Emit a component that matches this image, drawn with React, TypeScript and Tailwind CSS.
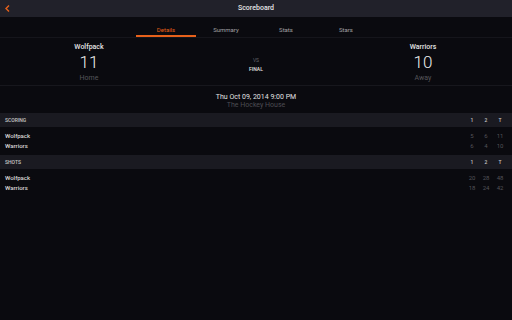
import React from 'react';

const tabs = ['Details', 'Summary', 'Stats', 'Stars'];

const sections = [
  {
    title: 'SCORING',
    rows: [
      { team: 'Wolfpack', values: [5, 6, 11] },
      { team: 'Warriors', values: [6, 4, 10] },
    ],
  },
  {
    title: 'SHOTS',
    rows: [
      { team: 'Wolfpack', values: [20, 28, 48] },
      { team: 'Warriors', values: [18, 24, 42] },
    ],
  },
];

const TeamScore: React.FC<{ name: string; score: number; side: string }> = ({ name, score, side }) => (
  <div className="w-[178px] flex flex-col items-center">
    <span className="h-[9px] text-[7px] leading-[9px] font-medium text-[#e6e6e6]">{name}</span>
    <span className="h-[18px] text-[17px] leading-[18px] font-light text-[#eeeeee] mt-[1px]">{score}</span>
    <span className="h-[9px] text-[7px] leading-[9px] text-[#57575c] mt-[3px]">{side}</span>
  </div>
);

export default function App() {
  return (
    <div className="w-[512px] h-[320px] bg-[#0a0a0f] overflow-hidden">
      {/* opacity just under 1 keeps the text on grayscale antialiasing */}
      <div
        className="w-full h-full flex flex-col opacity-[0.995]"
        style={{ fontFamily: 'Roboto, "Liberation Sans", sans-serif' }}
      >
        {/* Header */}
        <div className="h-[17px] bg-[#22222b] flex items-center relative shrink-0">
          <svg className="absolute left-[5px] top-[5px]" width="5" height="7" viewBox="0 0 5 7">
            <path d="M4 0.5 L1 3.5 L4 6.5" fill="none" stroke="#e8621c" strokeWidth="1.4" />
          </svg>
          <span className="w-full text-center text-[7px] leading-[9px] font-medium text-[#e8e8e8]">Scoreboard</span>
        </div>

        {/* Tabs */}
        <div className="h-[21px] flex justify-center border-b border-[#16161c] shrink-0">
          {tabs.map((tab, i) => (
            <div key={tab} className="w-[60px] flex flex-col">
              <span
                className={`h-[18px] pt-[9px] text-center text-[6px] leading-[8px] ${
                  i === 0 ? 'text-[#e8621c]' : 'text-[#a4a4a8]'
                }`}
              >
                {tab}
              </span>
              <div className={`h-[2px] ${i === 0 ? 'bg-[#e8621c]' : 'bg-transparent'}`} />
            </div>
          ))}
        </div>

        {/* Score */}
        <div className="h-[48px] flex items-start pt-[5px] border-b border-[#18181e] shrink-0">
          <TeamScore name="Wolfpack" score={11} side="Home" />
          <div className="flex-1 flex flex-col items-center pt-[14px]">
            <span className="text-[5px] leading-[6px] text-[#66666c]">VS</span>
            <span className="text-[5px] leading-[6px] font-medium text-[#e4e4e4] mt-[3px]">FINAL</span>
          </div>
          <TeamScore name="Warriors" score={10} side="Away" />
        </div>

        {/* Date */}
        <div className="h-[27px] flex flex-col items-center pt-[7px] shrink-0">
          <span className="h-[8px] text-[7px] leading-[8px] text-[#e4e4e4]">Thu Oct 09, 2014 9:00 PM</span>
          <span className="h-[8px] text-[7px] leading-[8px] text-[#4e4e54]">The Hockey House</span>
        </div>

        {/* Sections */}
        {sections.map((section) => (
          <div key={section.title} className="shrink-0">
            <div className="h-[14px] bg-[#1b1b22] flex items-center px-[5px]">
              <span className="flex-1 text-[5px] leading-[6px] font-medium text-[#c8c8c8]">{section.title}</span>
              {['1', '2', 'T'].map((c) => (
                <span key={c} className="w-[14px] text-center text-[5px] leading-[6px] font-medium text-[#c8c8c8]">
                  {c}
                </span>
              ))}
            </div>
            <div className="py-[4px]">
              {section.rows.map((row) => (
                <div key={row.team} className="h-[10px] flex items-center px-[5px]">
                  <span className="flex-1 text-[6px] leading-[8px] font-medium text-[#dadada]">{row.team}</span>
                  {row.values.map((v, i) => (
                    <span key={i} className="w-[14px] text-center text-[6px] leading-[8px] text-[#55555a]">
                      {v}
                    </span>
                  ))}
                </div>
              ))}
            </div>
          </div>
        ))}
      </div>
    </div>
  );
}
